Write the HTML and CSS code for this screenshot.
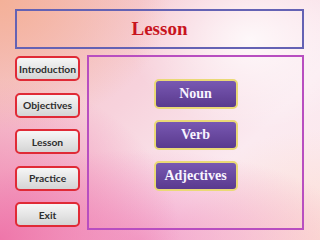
FILE: index.html
```html
<!DOCTYPE html>
<html>
<head>
<meta charset="utf-8">
<link rel="stylesheet" href="styles.css">
</head>
<body>
<div class="slide">
  <div class="title-box"><h1 class="title">Lesson</h1></div>
  <div class="main">
    <nav class="menu">
      <div class="menu-btn">Introduction</div>
      <div class="menu-btn">Objectives</div>
      <div class="menu-btn">Lesson</div>
      <div class="menu-btn">Practice</div>
      <div class="menu-btn">Exit</div>
    </nav>
    <section class="content">
      <div class="word-btn">Noun</div>
      <div class="word-btn">Verb</div>
      <div class="word-btn">Adjectives</div>
    </section>
  </div>
</div>
</body>
</html>
```
FILE: styles.css
```css
html, body {
  margin: 0;
  padding: 0;
  width: 320px;
  height: 240px;
  overflow: hidden;
}
.slide {
  box-sizing: border-box;
  width: 320px;
  height: 240px;
  padding: 9px 16px 10px 15px;
  display: flex;
  flex-direction: column;
  gap: 6px;
  background:
    radial-gradient(ellipse 170px 130px at 0px 0px, rgba(244,176,150,0.95), rgba(244,176,150,0) 100%),
    radial-gradient(ellipse 180px 160px at 0px 240px, rgba(238,110,165,0.9), rgba(238,110,165,0) 100%),
    radial-gradient(ellipse 220px 90px at 140px 240px, rgba(240,140,190,0.75), rgba(240,140,190,0) 100%),
    radial-gradient(ellipse 150px 110px at 320px 240px, rgba(252,222,210,0.9), rgba(252,222,210,0) 100%),
    radial-gradient(ellipse 120px 90px at 250px 40px, rgba(255,255,255,0.8), rgba(255,255,255,0) 100%),
    linear-gradient(135deg, #f4c0c4 0%, #f7d2dc 40%, #fbeaf0 70%, #fce8ec 100%);
}
.title-box {
  box-sizing: border-box;
  height: 40px;
  border: 2px solid #6462b4;
  display: flex;
  align-items: center;
  justify-content: center;
}
.title {
  margin: 0;
  font-family: "Liberation Serif", "Times New Roman", serif;
  font-weight: bold;
  font-size: 19px;
  color: #c8141e;
}
.main {
  flex: 1;
  display: flex;
  gap: 7px;
}
.menu {
  width: 65px;
  padding-top: 1px;
  display: flex;
  flex-direction: column;
  gap: 11.5px;
}
.menu-btn {
  box-sizing: border-box;
  height: 25px;
  border: 2px solid #e02a36;
  border-radius: 5px;
  background: linear-gradient(#f6f6f6, #e2e2e2 60%, #d4d4d4);
  display: flex;
  align-items: center;
  justify-content: center;
  font-family: Lato, "Open Sans", sans-serif;
  font-weight: bold;
  font-size: 10.3px;
  color: #2e2e2e;
}
.content {
  flex: 1;
  box-sizing: border-box;
  border: 2px solid #b84ec0;
  padding-top: 22px;
  display: flex;
  flex-direction: column;
  align-items: center;
  gap: 11px;
}
.word-btn {
  box-sizing: border-box;
  width: 84px;
  height: 30px;
  border: 2px solid #ead976;
  border-radius: 5px;
  background: linear-gradient(#7858b2, #5a3a8e);
  display: flex;
  align-items: center;
  justify-content: center;
  font-family: "Liberation Serif", "Times New Roman", serif;
  font-weight: bold;
  font-size: 14px;
  color: #f8f4ff;
}
```
